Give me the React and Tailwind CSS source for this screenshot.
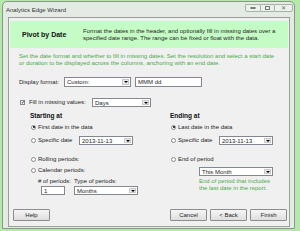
// Analytics Edge Wizard - Pivot by Date dialog
const FONT = "font-['Liberation_Sans',Arial,sans-serif]";

// Dropdown with a small arrow button on the right
function Select({ className, text }) {
    return (
        <div className={`flex items-stretch bg-white border border-[#828790] ${className}`}>
            <div className="flex-1 pl-[2px] leading-none flex items-center overflow-hidden whitespace-nowrap">{text}</div>
            <div className="w-[7px] m-[1px] bg-[#ececec] border border-[#c8c8c8] flex items-center justify-center">
                <div className="w-0 h-0 border-l-[2px] border-r-[2px] border-t-[2px] border-l-transparent border-r-transparent border-t-black" />
            </div>
        </div>
    );
}

function Radio({ checked }) {
    return (
        <div className="w-[5px] h-[5px] rounded-full bg-white border border-[#8a8a8a] flex items-center justify-center shrink-0">
            {checked && <div className="w-[2px] h-[2px] rounded-full bg-black" />}
        </div>
    );
}

function RadioRow({ checked, label, className = '', children }) {
    return (
        <div className={`flex items-center ${className}`}>
            <div className="ml-[1px] mr-[2px]">
                <Radio checked={checked} />
            </div>
            {children ? (
                <>
                    <span className="w-[41px] whitespace-nowrap">{label}</span>
                    {children}
                </>
            ) : (
                <span className="whitespace-nowrap">{label}</span>
            )}
        </div>
    );
}

function Button({ label }) {
    return (
        <div className="w-[37px] h-[12px] border border-[#8c8c8c] rounded-[1px] bg-gradient-to-b from-[#f6f6f6] to-[#dedede] flex items-center justify-center leading-none">
            {label}
        </div>
    );
}

export default function App() {
    return (
        <div className={`w-[300px] h-[231px] bg-[#b4e9aa] pl-[2px] pt-[1px] overflow-hidden text-[6px] text-[#1e1e1e] ${FONT}`}>
            {/* Window frame */}
            <div className="w-[293px] h-[228px] border border-[#8a968a] rounded-t-[5px] bg-[#e4ebe4] flex flex-col">
                {/* Title bar */}
                <div className="h-[15px] flex items-start shrink-0">
                    <span className="pl-[3px] pt-[5px] leading-none text-[#333] text-[6px]">Analytics Edge Wizard</span>
                    <div className="ml-auto mr-[1px] mt-[2px] flex">
                        <div className="w-[16px] h-[8px] border border-[#a9b2a9] rounded-bl-[2px] bg-[#edf1ed] flex items-center justify-center">
                            <div className="w-[6px] h-[2px] border border-[#7a7a7a] rounded-[1px]" />
                        </div>
                        <div className="w-[13px] h-[8px] border-y border-[#a9b2a9] bg-[#edf1ed] flex items-center justify-center">
                            <div className="w-[5px] h-[4px] border border-[#7a7a7a]" />
                        </div>
                        <div className="w-[19px] h-[8px] border border-[#a9b2a9] rounded-br-[2px] bg-[#edf1ed] flex items-center justify-center text-[#6a6a6a] text-[6px] leading-none">
                            ✕
                        </div>
                    </div>
                </div>

                {/* Client area */}
                <div className="ml-[5px] w-[282px] h-[210px] border border-[#97a197] bg-[#f0f0f0] flex flex-col">
                    {/* Green header */}
                    <div className="mt-[3px] mx-[1px] h-[27px] bg-[#c5fcc5] flex items-center shrink-0">
                        <div className="w-[73px] pl-[12px] font-bold text-[7px] leading-none text-[#111]">Pivot by Date</div>
                        <div className="leading-[7px]">
                            <div>Format the dates in the header, and optionally fill in missing dates over a</div>
                            <div>specified date range. The range can be fixed or float with the data.</div>
                        </div>
                    </div>

                    {/* Instructions */}
                    <div className="mt-[5px] pl-[10px] leading-[7px] text-[#4aab4a]">
                        <div>Set the date format and whether to fill in missing dates. Set the resolution and select a start date</div>
                        <div>or duration to be displayed across the columns, anchoring with an end date.</div>
                    </div>

                    {/* Display format */}
                    <div className="mt-[10px] pl-[10px] h-[10px] flex items-center">
                        <span className="w-[45px] whitespace-nowrap">Display format:</span>
                        <Select className="w-[67px] h-[10px]" text="Custom:" />
                        <div className="ml-[4px] w-[67px] h-[10px] bg-white border border-[#828790] pl-[2px] flex items-center leading-none">MMM dd</div>
                    </div>

                    {/* Fill in missing values */}
                    <div className="mt-[11px] pl-[11px] h-[9px] flex items-center">
                        <div className="w-[5px] h-[5px] bg-white border border-[#8a8a8a] flex items-center justify-center text-[5px] leading-none font-bold">✓</div>
                        <span className="ml-[4px] w-[63px] whitespace-nowrap">Fill in missing values:</span>
                        <Select className="w-[59px] h-[9px]" text="Days" />
                    </div>

                    {/* Start / end columns */}
                    <div className="mt-[5px] pl-[21px] flex">
                        <div className="w-[140px] flex flex-col">
                            <div className="h-[8px] font-bold text-[6.5px] leading-[8px] text-[#111]">Starting at</div>
                            <RadioRow className="mt-[3px] h-[8px]" checked label="First date in the data" />
                            <RadioRow className="mt-[5px] h-[9px]" label="Specific date">
                                <Select className="w-[54px] h-[9px]" text="2013-11-13" />
                            </RadioRow>
                            <RadioRow className="mt-[10px] h-[8px]" label="Rolling periods:" />
                            <RadioRow className="mt-[3px] h-[8px]" label="Calendar periods:" />
                            <div className="mt-[3px] h-[8px] pl-[8px] flex items-center">
                                <span className="w-[36px] whitespace-nowrap">#&nbsp;of periods:</span>
                                <span className="whitespace-nowrap">Type of periods:</span>
                            </div>
                            <div className="mt-[1px] h-[9px] pl-[11px] flex">
                                <div className="w-[24px] h-[9px] bg-white border border-[#828790] pl-[2px] flex items-center leading-none">1</div>
                                <Select className="ml-[9px] w-[64px] h-[9px]" text="Months" />
                            </div>
                        </div>

                        <div className="flex flex-col">
                            <div className="h-[8px] font-bold text-[6.5px] leading-[8px] text-[#111]">Ending at</div>
                            <RadioRow className="mt-[3px] h-[8px]" checked label="Last date in the data" />
                            <RadioRow className="mt-[5px] h-[9px]" label="Specific date">
                                <Select className="w-[54px] h-[9px]" text="2013-11-13" />
                            </RadioRow>
                            <RadioRow className="mt-[10px] h-[8px]" label="End of period" />
                            <Select className="mt-[4px] ml-[29px] w-[74px] h-[9px]" text="This Month" />
                            <div className="mt-[2px] ml-[29px] leading-[7px] text-[#4aab4a]">
                                <div>End of period that includes</div>
                                <div>the last date in the report.</div>
                            </div>
                        </div>
                    </div>

                    {/* Bottom buttons */}
                    <div className="mt-auto mb-[5px] pl-[4px] pr-[2px] flex">
                        <Button label="Help" />
                        <div className="ml-auto flex gap-[3px]">
                            <Button label="Cancel" />
                            <Button label="< Back" />
                            <Button label="Finish" />
                        </div>
                    </div>
                </div>
            </div>
        </div>
    );
}
